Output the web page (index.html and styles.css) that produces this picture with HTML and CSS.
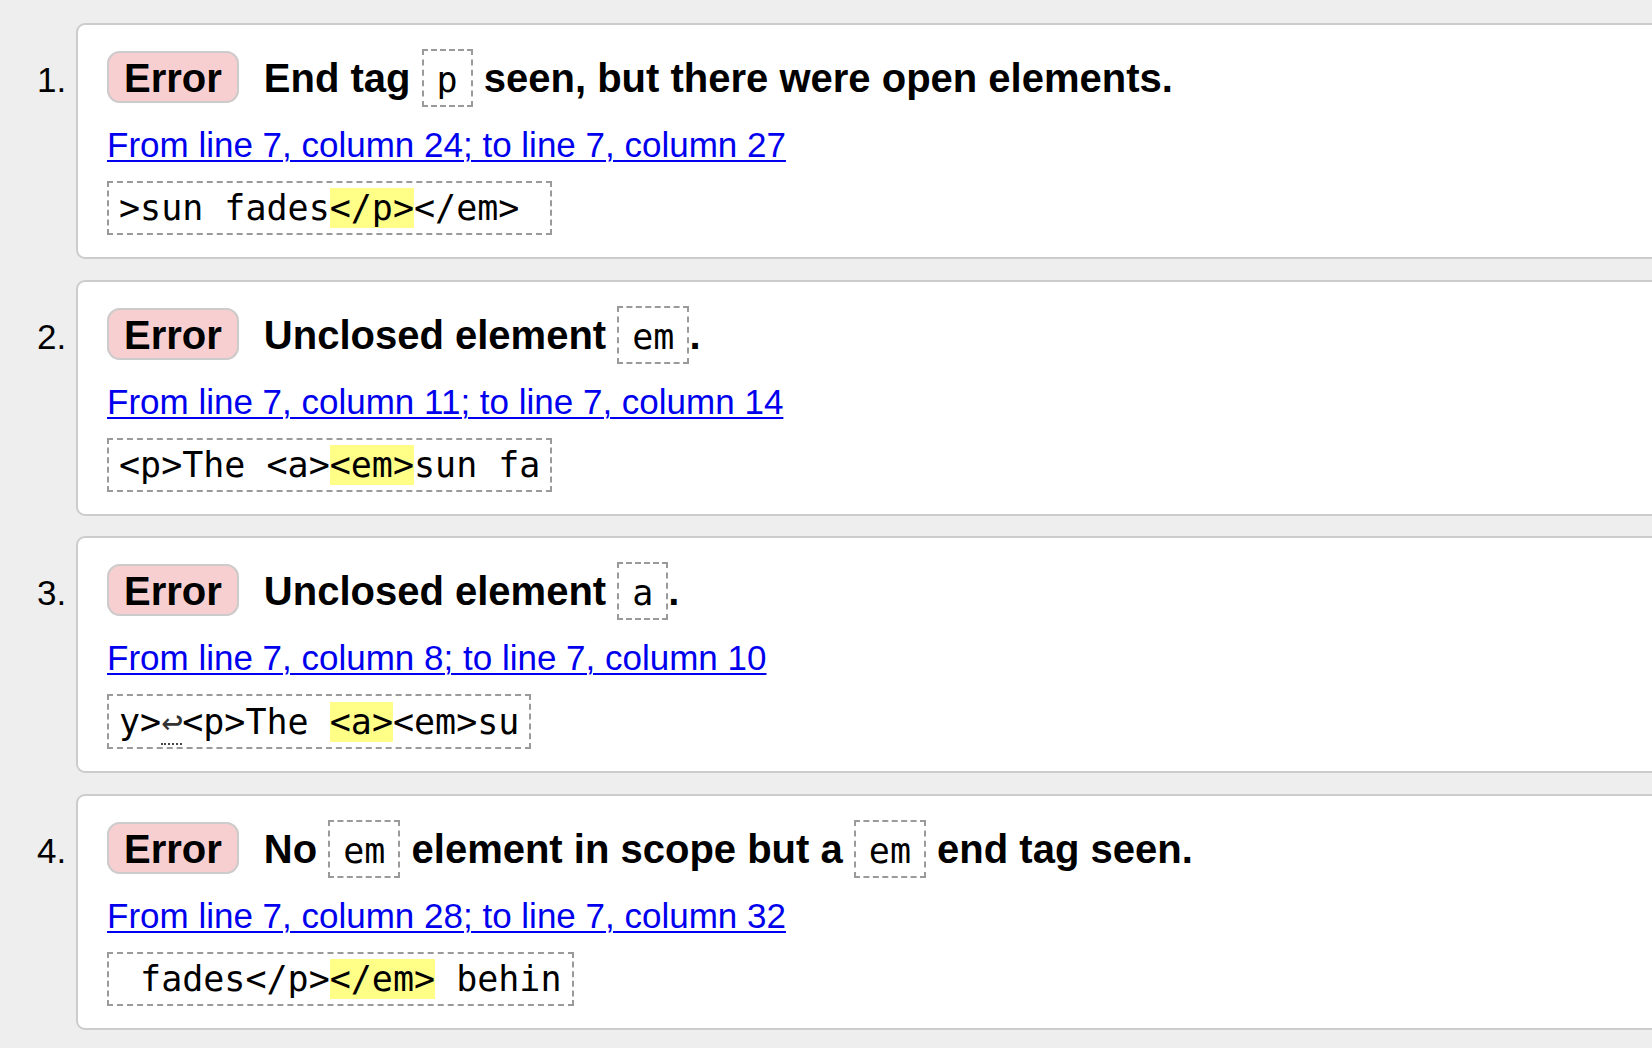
FILE: index.html
```html
<!DOCTYPE html>
<html lang="en">
<head>
<meta charset="utf-8">
<title>Validation messages</title>
<link rel="stylesheet" href="styles.css">
</head>
<body>
<ol class="messages">
  <li class="message">
    <p class="msg"><strong class="badge">Error</strong>End tag <code>p</code> seen, but there were open elements.</p>
    <p class="location"><a href="#l7c24">From line 7, column 24; to line 7, column 27</a></p>
    <div class="extract">&gt;sun fades<b class="hl">&lt;/p&gt;</b>&lt;/em&gt; </div>
  </li>
  <li class="message">
    <p class="msg"><strong class="badge">Error</strong>Unclosed element <code>em</code>.</p>
    <p class="location"><a href="#l7c11">From line 7, column 11; to line 7, column 14</a></p>
    <div class="extract">&lt;p&gt;The &lt;a&gt;<b class="hl">&lt;em&gt;</b>sun fa</div>
  </li>
  <li class="message">
    <p class="msg"><strong class="badge">Error</strong>Unclosed element <code>a</code>.</p>
    <p class="location"><a href="#l7c8">From line 7, column 8; to line 7, column 10</a></p>
    <div class="extract">y&gt;<span class="lf" title="line feed"><span class="lf-glyph">↩</span></span>&lt;p&gt;The <b class="hl">&lt;a&gt;</b>&lt;em&gt;su</div>
  </li>
  <li class="message">
    <p class="msg"><strong class="badge">Error</strong>No <code>em</code> element in scope but a <code>em</code> end tag seen.</p>
    <p class="location"><a href="#l7c28">From line 7, column 28; to line 7, column 32</a></p>
    <div class="extract"> fades&lt;/p&gt;<b class="hl">&lt;/em&gt;</b> behin</div>
  </li>
</ol>
</body>
</html>
```

FILE: styles.css
```css
html, body {
  margin: 0;
  padding: 0;
  background: #eeeeee;
  overflow: hidden;
}

body {
  font-family: "Liberation Sans", Arial, Helvetica, sans-serif;
  color: #000;
}

.messages {
  margin: 0;
  padding: 23px 0 0 76px;
  list-style: decimal outside;
}

.message {
  font-size: 35px;
  background: #ffffff;
  border: 2px solid #cccccc;
  border-radius: 9px;
  margin: 0 -40px 20.7px 0;
  padding: 23px 29px 22px 29px;
}

.message::marker {
  color: #000;
  font-family: "Liberation Sans", Arial, sans-serif;
}

.msg {
  margin: 0;
  font-size: 40px;
  font-weight: bold;
  line-height: 60px;
  white-space: nowrap;
}

.badge {
  font-weight: bold;
  background: #f7cfd0;
  border: 2px solid #cccccc;
  border-radius: 13px;
  padding: 3px 15px 1px;
  margin-right: 25px;
}

.msg code {
  font-family: "DejaVu Sans Mono", Menlo, monospace;
  font-weight: normal;
  font-size: 35px;
  line-height: 1;
  border: 2px dashed #9a9a9a;
  padding: 9px 13px 5px;
}

.location {
  margin: 16px 0 0;
  line-height: 42px;
}

.location a {
  color: #0000ee;
  text-decoration: underline;
  text-underline-offset: 3px;
  text-decoration-thickness: 2px;
}

.extract {
  width: fit-content;
  margin-top: 15px;
  font-family: "DejaVu Sans Mono", Menlo, monospace;
  font-size: 35px;
  line-height: 41px;
  white-space: pre;
  border: 2px dashed #9a9a9a;
  padding: 5px 10px 4px;
}

.hl {
  font-weight: normal;
  background: #ffff88;
}

.lf {
  display: inline-block;
  width: 1ch;
  text-align: center;
  line-height: 41px;
  border-bottom: 2px dotted #444444;
  margin-bottom: -2px;
  vertical-align: baseline;
}

.lf-glyph {
  color: #333333;
  font-size: 36px;
}
```
